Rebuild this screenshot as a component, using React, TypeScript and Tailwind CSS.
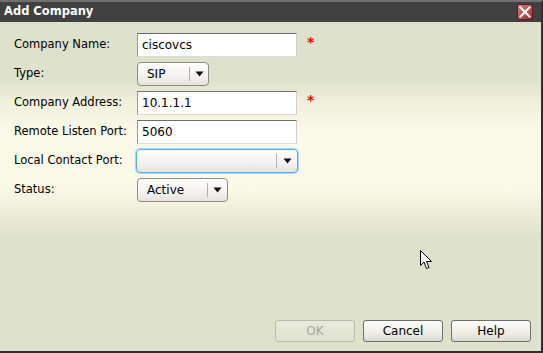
import React from 'react';

const font = { fontFamily: '"DejaVu Sans", Verdana, sans-serif' };

function Arrow() {
  return (
    <svg width="9" height="6" viewBox="0 0 9 6">
      <path d="M0.5 0.5 H8.5 L4.5 5.5 Z" fill="#111" />
    </svg>
  );
}

function TextBox({ value, star }: { value: string; star?: boolean }) {
  return (
    <div className="flex items-center">
      <div className="w-[160px] h-[24px] bg-white border border-t-[#6e6e6e] border-l-[#9a9a9a] border-r-[#cfcfcf] border-b-[#dadada] flex items-center pl-[4px] text-[12px] text-black">
        {value}
      </div>
      {star && <span className="ml-[10px] -mt-[4px] text-[#ff0000] text-[14px] font-bold">*</span>}
    </div>
  );
}

function Select({ value, width, divider, focus }: { value: string; width: string; divider: string; focus?: boolean }) {
  return (
    <div
      className={`${width} h-[24px] rounded-[4px] flex items-center bg-[linear-gradient(#fefefe,#f3f2ee_60%,#e6e4de)] text-[12px] text-black ${
        focus ? 'border border-[#5aaee8] shadow-[0_0_0_1px_#a8d6f6]' : 'border border-[#8a8a8a]'
      }`}
    >
      <div className={`${divider} pl-[9px] h-full flex items-center`}>{value}</div>
      <div className="w-px h-[14px] bg-[#b0b0b0]" />
      <div className="flex-1 flex items-center justify-center">
        <Arrow />
      </div>
    </div>
  );
}

function Row({ label, children }: { label: string; children: React.ReactNode }) {
  return (
    <div className="h-[29px] flex items-center">
      <div className="w-[123px] text-[11.5px] text-black">{label}</div>
      {children}
    </div>
  );
}

function Btn({ label, disabled }: { label: string; disabled?: boolean }) {
  return (
    <div
      className={`w-[80px] h-[22px] rounded-[3px] flex items-center justify-center text-[12px] ${
        disabled
          ? 'border border-[#b8bcaa] text-[#a6a99a] bg-[linear-gradient(#e8eadb,#dfe2cf)]'
          : 'border border-[#6e6e6e] text-black bg-[linear-gradient(#fdfdfb,#eeede6_60%,#dcdbd2)]'
      }`}
    >
      {label}
    </div>
  );
}

export default function App() {
  return (
    <div className="w-[543px] h-[353px] overflow-hidden flex flex-col border-t-2 border-t-[#707070] border-r-2 border-r-[#2e2e2e] border-b-2 border-b-[#2e2e2e]" style={font}>
      <div className="h-[20px] bg-[#404040] flex items-center justify-between pl-[4px] pr-[8px]">
        <span className="text-white font-bold text-[11.5px]">Add Company</span>
        <div className="w-[16px] h-[16px] border border-[#5a1e1e] bg-[linear-gradient(135deg,#d98080,#c05050_50%,#953232)] flex items-center justify-center">
          <svg width="12" height="12" viewBox="0 0 12 12">
            <path d="M1.5 1.5 L10.5 10.5 M10.5 1.5 L1.5 10.5" stroke="#fff" strokeWidth="2" strokeLinecap="square" />
          </svg>
        </div>
      </div>
      <div className="relative flex-1 flex flex-col justify-between pl-[14px] pt-[8px] pr-[10px] pb-[9px] bg-[linear-gradient(#dee2cc_0px,#dee2cc_58px,#f1f0dc_80px,#fbf9e8_110px,#fbf9e8_165px,#eeeeda_190px,#dee2cc_215px,#dee2cc_100%)]">
        <div className="flex flex-col">
          <Row label="Company Name:">
            <TextBox value="ciscovcs" star />
          </Row>
          <Row label="Type:">
            <Select value="SIP" width="w-[72px]" divider="w-[51px]" />
          </Row>
          <Row label="Company Address:">
            <TextBox value="10.1.1.1" star />
          </Row>
          <Row label="Remote Listen Port:">
            <TextBox value="5060" />
          </Row>
          <Row label="Local Contact Port:">
            <div className="-ml-px">
              <Select value="" width="w-[162px]" divider="w-[139px]" focus />
            </div>
          </Row>
          <Row label="Status:">
            <Select value="Active" width="w-[91px]" divider="w-[69px]" />
          </Row>
        </div>
        <div className="flex justify-end gap-[8px]">
          <Btn label="OK" disabled />
          <Btn label="Cancel" />
          <Btn label="Help" />
        </div>
        <svg className="absolute left-[420px] top-[228px]" width="13" height="20" viewBox="0 0 13 20">
          <path d="M0.5 0.5 L0.5 15.5 L4 12 L6.5 18.5 L9 17.5 L6.5 11.5 L11.5 11.5 Z" fill="#fff" stroke="#000" strokeWidth="1" />
        </svg>
      </div>
    </div>
  );
}
